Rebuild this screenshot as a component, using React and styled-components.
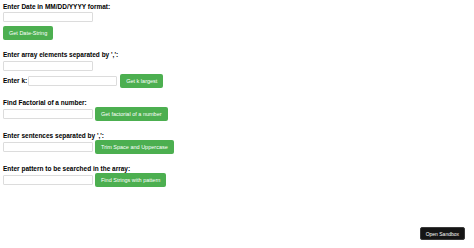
import React from 'react';
import styled, { createGlobalStyle } from 'styled-components';

const GlobalStyle = createGlobalStyle`
  body {
    margin: 0;
    padding: 3px;
    background: #fff;
    font-family: "Liberation Sans", Arial, sans-serif;
    font-size: 6.4px;
    line-height: 8px;
    color: #000;
  }
`;

const Section = styled.div`
  margin-bottom: ${({ gap }) => gap ?? 11}px;
`;

const Label = styled.label`
  display: block;
  font-size: 6.5px;
  line-height: 8px;
  font-weight: bold;
  color: #000;
  margin-bottom: ${({ mb }) => mb || 0}px;
`;

const InlineLabel = styled(Label)`
  display: inline;
`;

const Row = styled.div`
  display: flex;
  align-items: center;
  gap: ${({ gap }) => gap ?? 2}px;
  margin-top: ${({ mt }) => mt || 0}px;
`;

const Input = styled.input`
  box-sizing: border-box;
  width: ${({ w }) => w || 90}px;
  height: 10px;
  border: 1px solid #dcdcdc;
  border-radius: 1px;
  padding: 0 2px;
  margin: 0;
  font-size: 6px;
  outline: none;
`;

const Button = styled.button`
  box-sizing: border-box;
  height: 14px;
  padding: 0 6px;
  margin: 0 0 0 ${({ ml }) => ml || 0}px;
  background: #4caf50;
  color: #fff;
  border: none;
  border-radius: 2px;
  font-family: "Liberation Sans", Arial, sans-serif;
  font-size: 5.5px;
  cursor: pointer;
`;

const Sandbox = styled.button`
  position: fixed;
  right: 9px;
  bottom: 8px;
  height: 13px;
  padding: 0 5px;
  background: #151515;
  color: #fff;
  border: 1px solid #3a3a3a;
  border-radius: 2px;
  font-family: "Liberation Sans", Arial, sans-serif;
  font-size: 5px;
`;

export default function App() {
  return (
    <>
      <GlobalStyle />
      <Section gap={11}>
        <Label mb={1}>Enter Date in MM/DD/YYYY format:</Label>
        <Row>
          <Input />
        </Row>
        <Row mt={4}>
          <Button>Get Date-String</Button>
        </Row>
      </Section>

      <Section>
        <Label mb={2}>Enter array elements separated by ',':</Label>
        <Row>
          <Input />
        </Row>
        <Row mt={3} gap={1}>
          <InlineLabel>Enter k:</InlineLabel>
          <Input w={89} />
          <Button ml={2}>Get k largest</Button>
        </Row>
      </Section>

      <Section>
        <Label>Find Factorial of a number:</Label>
        <Row>
          <Input />
          <Button>Get factorial of a number</Button>
        </Row>
      </Section>

      <Section>
        <Label>Enter sentences separated by ',':</Label>
        <Row>
          <Input />
          <Button>Trim Space and Uppercase</Button>
        </Row>
      </Section>

      <Section>
        <Label>Enter pattern to be searched in the array:</Label>
        <Row>
          <Input />
          <Button>Find Strings with pattern</Button>
        </Row>
      </Section>

      <Sandbox>Open Sandbox</Sandbox>
    </>
  );
}
